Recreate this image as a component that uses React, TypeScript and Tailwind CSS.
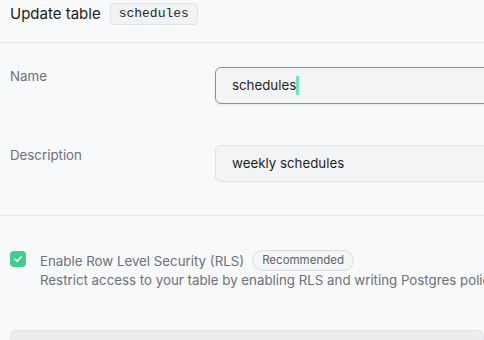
import React from 'react';

const App: React.FC = () => {
  return (
    <div
      className="w-[484px] h-[340px] overflow-hidden bg-[#f8f9fb] text-[#1c1c1c]"
      style={{ fontFamily: 'Inter, "Noto Sans", sans-serif' }}
    >
      {/* Header */}
      <div className="flex items-center gap-[9px] px-[10px] pt-[3px] pb-[17px] border-b border-[#e6e8eb]">
        <h2 className="text-[15px] leading-[22px] text-[#1c1c1c]">Update table</h2>
        <code
          className="h-[22px] px-[8px] flex items-center rounded-[4px] border border-[#e2e3e6] bg-[#f1f2f4] text-[13px] text-[#2a2a2a]"
          style={{ fontFamily: '"Liberation Mono", monospace' }}
        >
          schedules
        </code>
      </div>

      {/* Fields */}
      <div className="pt-[24px] pb-[33px] border-b border-[#e6e8eb] flex flex-col gap-[41px]">
        <div className="flex items-start">
          <label className="w-[215px] shrink-0 pl-[10px] text-[13.3px] leading-[18px] text-[#6c7078]">Name</label>
          <div className="h-[37px] w-[300px] shrink-0 rounded-[6px] border border-[#8e9196] bg-[#f3f4f6] shadow-[0_1px_3px_rgba(0,0,0,0.08)] flex items-center pl-[16px]">
            <span className="text-[13.3px] text-[#1f1f1f]">schedules</span>
            <span className="w-[3px] h-[19px] bg-[#6ee7b7]" />
          </div>
        </div>
        <div className="flex items-start">
          <label className="w-[215px] shrink-0 pl-[10px] pt-[1px] text-[13.3px] leading-[18px] text-[#6c7078]">Description</label>
          <div className="h-[37px] w-[300px] shrink-0 rounded-[6px] border border-[#dfe1e5] bg-[#f3f4f6] flex items-center pl-[16px]">
            <span className="text-[13.3px] text-[#1f1f1f]">weekly schedules</span>
          </div>
        </div>
      </div>

      {/* RLS */}
      <div className="pt-[34px] px-[10px] flex gap-[14px]">
        <div className="mt-[1px] w-[16px] h-[16px] shrink-0 rounded-[4px] bg-[#3ecf8e] flex items-center justify-center">
          <svg width="10" height="10" viewBox="0 0 12 12" fill="none">
            <path d="M2.5 6.3 5 8.6 9.6 3.6" stroke="white" strokeWidth="2" strokeLinecap="round" strokeLinejoin="round" />
          </svg>
        </div>
        <div className="flex flex-col whitespace-nowrap">
          <div className="flex items-center gap-[8px]">
            <span className="text-[13.3px] leading-[18px] text-[#6c7078]">Enable Row Level Security (RLS)</span>
            <span className="h-[21px] px-[9px] rounded-full border border-[#d9dbdf] bg-[#f4f5f7] flex items-center text-[11.5px] text-[#5f636a]">
              Recommended
            </span>
          </div>
          <span className="text-[13.3px] leading-[18px] text-[#6c7078]">
            Restrict access to your table by enabling RLS and writing Postgres polic
          </span>
        </div>
      </div>

      <div className="mt-[41px] ml-[10px] h-[40px] rounded-[6px] border border-[#e4e5e8] bg-[#ededef]" />
    </div>
  );
};

export default App;
